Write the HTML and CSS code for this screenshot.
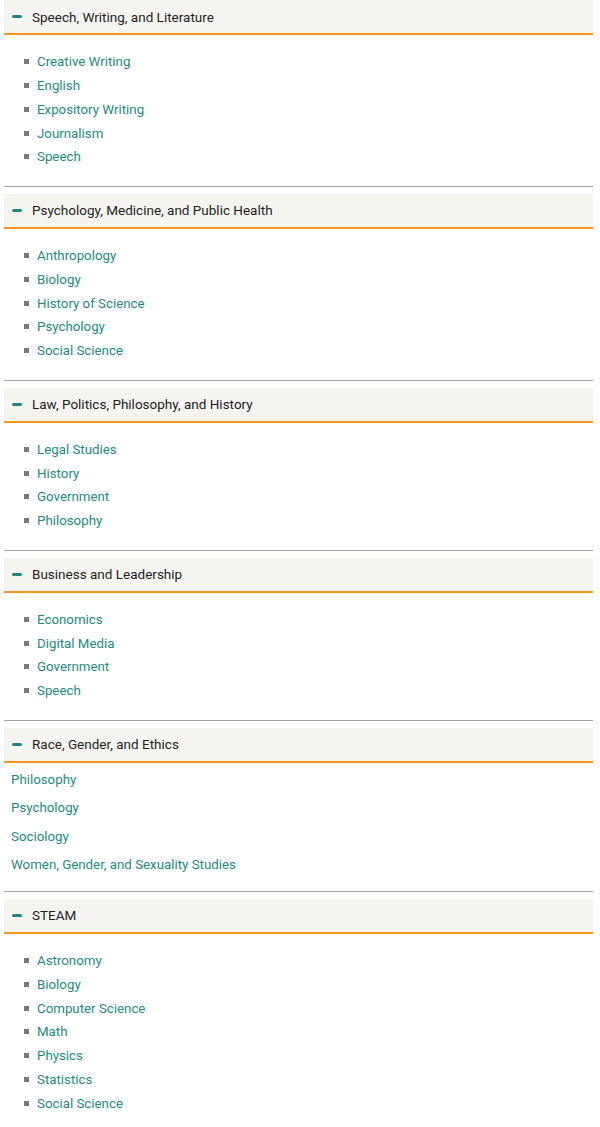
FILE: index.html
```html
<!DOCTYPE html>
<html lang="en">
<head>
<meta charset="utf-8">
<title>Subjects</title>
<link rel="stylesheet" href="styles.css">
</head>
<body>
<div class="accordion">
  <section class="panel">
    <div class="panel-head"><span class="minus"></span><span class="title">Speech, Writing, and Literature</span></div>
    <ul class="links">
      <li><a href="#">Creative Writing</a></li>
      <li><a href="#">English</a></li>
      <li><a href="#">Expository Writing</a></li>
      <li><a href="#">Journalism</a></li>
      <li><a href="#">Speech</a></li>
    </ul>
  </section>
  <section class="panel">
    <div class="panel-head"><span class="minus"></span><span class="title">Psychology, Medicine, and Public Health</span></div>
    <ul class="links">
      <li><a href="#">Anthropology</a></li>
      <li><a href="#">Biology</a></li>
      <li><a href="#">History of Science</a></li>
      <li><a href="#">Psychology</a></li>
      <li><a href="#">Social Science</a></li>
    </ul>
  </section>
  <section class="panel">
    <div class="panel-head"><span class="minus"></span><span class="title">Law, Politics, Philosophy, and History</span></div>
    <ul class="links">
      <li><a href="#">Legal Studies</a></li>
      <li><a href="#">History</a></li>
      <li><a href="#">Government</a></li>
      <li><a href="#">Philosophy</a></li>
    </ul>
  </section>
  <section class="panel">
    <div class="panel-head"><span class="minus"></span><span class="title">Business and Leadership</span></div>
    <ul class="links">
      <li><a href="#">Economics</a></li>
      <li><a href="#">Digital Media</a></li>
      <li><a href="#">Government</a></li>
      <li><a href="#">Speech</a></li>
    </ul>
  </section>
  <section class="panel">
    <div class="panel-head"><span class="minus"></span><span class="title">Race, Gender, and Ethics</span></div>
    <div class="plain">
      <p><a href="#">Philosophy</a></p>
      <p><a href="#">Psychology</a></p>
      <p><a href="#">Sociology</a></p>
      <p><a href="#">Women, Gender, and Sexuality Studies</a></p>
    </div>
  </section>
  <section class="panel last">
    <div class="panel-head"><span class="minus"></span><span class="title">STEAM</span></div>
    <ul class="links">
      <li><a href="#">Astronomy</a></li>
      <li><a href="#">Biology</a></li>
      <li><a href="#">Computer Science</a></li>
      <li><a href="#">Math</a></li>
      <li><a href="#">Physics</a></li>
      <li><a href="#">Statistics</a></li>
      <li><a href="#">Social Science</a></li>
    </ul>
  </section>
</div>
</body>
</html>
```

FILE: styles.css
```css
html, body {
  margin: 0;
  padding: 0;
  background: #ffffff;
}

body {
  font-family: Roboto, "Liberation Sans", Arial, sans-serif;
  font-size: 13.3px;
  color: #222222;
}

.accordion {
  width: 589px;
  margin-left: 4px;
}

.panel {
  border-bottom: 1px solid #a5a5a5;
  margin-bottom: 7px;
}

.panel.last {
  border-bottom: none;
}

.panel-head {
  height: 33px;
  background: #f5f4f0;
  border-bottom: 2px solid #f7941d;
  display: flex;
  align-items: center;
  padding-left: 8px;
  gap: 10px;
}

.minus {
  width: 10px;
  height: 3px;
  border-radius: 2px;
  background: #1d8a7c;
  flex: none;
}

.title {
  font-size: 13.5px;
  color: #1f1f1f;
}

.links {
  list-style: none;
  margin: 0;
  padding: 15px 0 17px 20px;
}

.links li {
  display: flex;
  align-items: center;
  height: 23.75px;
}

.links li::before {
  content: "";
  width: 5px;
  height: 5px;
  background: #7a7a7a;
  margin-right: 8px;
  flex: none;
}

a {
  color: #1c8c7d;
  text-decoration: none;
}

.plain {
  padding: 3px 0 12px 7px;
}

.plain p {
  margin: 0;
  height: 28.3px;
  display: flex;
  align-items: center;
}
```
